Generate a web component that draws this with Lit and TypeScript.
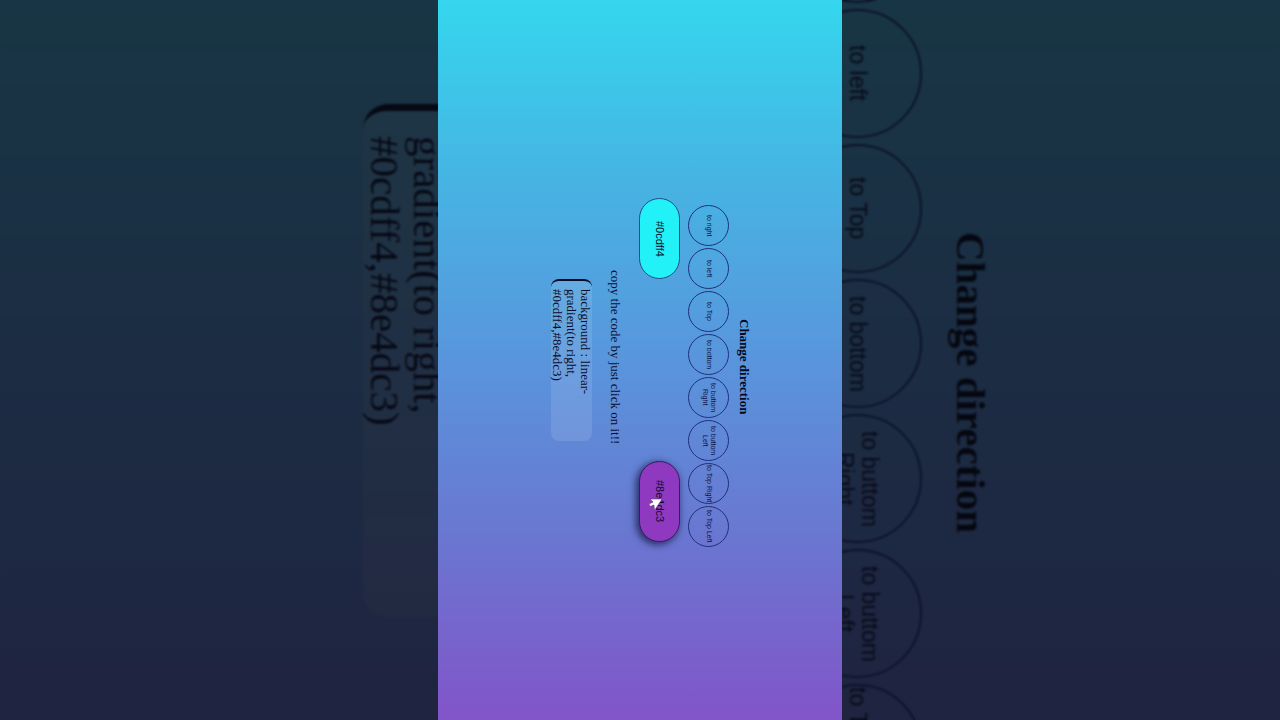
import { LitElement, html, css, nothing } from "lit";
import { customElement, property, state } from "lit/decorators.js";

const DIRECTIONS = [
  "to right",
  "to left",
  "to Top",
  "to bottom",
  "to buttom\nRight",
  "to buttom\nLeft",
  "to Top Right",
  "to Top Left",
];

@customElement("gradient-maker")
class GradientMaker extends LitElement {
  @property({ type: Boolean }) pointer = false;
  @state() private direction = "to right";

  static styles = css`
    :host {
      display: flex;
      flex-direction: column;
      align-items: center;
      padding-block-end: var(--end-space);
      writing-mode: vertical-rl;
      color: #0a0c2c;
      font-family: "Liberation Serif", serif;
      font-size: var(--text);
      line-height: var(--line);
      white-space: nowrap;
    }
    h1 {
      margin: 0;
      padding-inline-start: var(--title-shift);
      font-size: inherit;
      font-weight: bold;
      color: #060719;
    }
    button {
      box-sizing: border-box;
      margin: 0;
      padding: 0;
      color: inherit;
      background: none;
      writing-mode: vertical-rl;
      font-family: "Liberation Sans", sans-serif;
      cursor: pointer;
    }
    .directions {
      display: flex;
      gap: var(--ring-gap);
      margin-block-start: var(--gap);
      padding-inline-start: var(--ring-shift);
    }
    .ring {
      inline-size: var(--ring);
      block-size: var(--ring);
      border: var(--stroke) solid #20307a;
      border-radius: 50%;
      font-size: var(--small);
      line-height: var(--small-line);
      white-space: pre;
      color: #10133f;
    }
    .colors {
      display: flex;
      gap: var(--pill-gap);
      margin-block-start: var(--gap);
      padding-inline-start: var(--pill-shift);
    }
    .pill {
      position: relative;
      inline-size: var(--pill);
      block-size: var(--ring);
      border: var(--stroke) solid #1d4f86;
      border-radius: var(--ring);
      font-size: var(--medium);
    }
    .first {
      background: #22f1f8;
    }
    .second {
      background: #8f39c0;
      border-color: #3a1a66;
      box-shadow: -2px 2px 7px 1px #1c1c4ccc;
    }
    p {
      margin: 0;
      margin-block-start: var(--hint-gap);
      padding-inline-end: var(--hint-shift);
    }
    .code {
      inline-size: var(--box);
      block-size: var(--ring);
      margin-block-start: var(--hint-gap);
      padding-inline-start: var(--inset);
      border: 0 solid #080b28;
      border-inline-start-width: var(--edge);
      border-radius: var(--radius);
      background: #ffffff1c;
      font-family: inherit;
      font-size: inherit;
      line-height: var(--code-line);
      text-align: start;
      white-space: pre;
    }
    .cursor {
      position: absolute;
      top: 36px;
      left: 8px;
      width: 16px;
      height: 14px;
    }
  `;

  render() {
    return html`
      <h1>Change direction</h1>
      <div class="directions">
        ${DIRECTIONS.map(
          (d) => html`<button class="ring" @click=${() => (this.direction = d)}>${d}</button>`
        )}
      </div>
      <div class="colors">
        <button class="pill first">#0cdff4</button>
        <button class="pill second">
          #8e4dc3
          ${this.pointer
            ? html`<svg class="cursor" viewBox="0 0 16 14" aria-hidden="true">
                <path
                  d="M14 1 L2 1 L5 4 L1 6 L2 8.500 L6 7 L6.500 12.500 Z"
                  fill="#fff"
                  stroke="#5d3a78"
                  stroke-width=".6"
                />
              </svg>`
            : nothing}
        </button>
      </div>
      <p>copy the code by just click on it!!</p>
      <button class="code">${`background : linear-\ngradient(${this.direction},\n#0cdff4,#8e4dc3)`}</button>
    `;
  }
}

@customElement("app-root")
class AppRoot extends LitElement {
  static styles = css`
    :host {
      position: relative;
      display: flex;
      justify-content: center;
      height: 100vh;
      overflow: hidden;
      background: #1c2c42;
    }
    .backdrop {
      position: absolute;
      inset: 0;
      display: flex;
      align-items: center;
      justify-content: center;
      background: linear-gradient(#4fb8e2, #5a98dc 45%, #6a74d2);
    }
    .shade {
      position: absolute;
      inset: 0;
      background: #06080ebd;
      backdrop-filter: blur(1px);
    }
    .screen {
      position: relative;
      display: flex;
      align-items: center;
      justify-content: center;
      aspect-ratio: 101 / 180;
      height: 100%;
      background: linear-gradient(#35d6ee, #46b4e3 25%, #5995dc 50%, #6a76d1 75%, #8254c8);
    }
    .small {
      --text: 13px;
      --line: 15px;
      --small: 7px;
      --small-line: 8px;
      --medium: 11px;
      --code-line: 14px;
      --title-shift: 14px;
      --ring-shift: 32px;
      --pill-shift: 20px;
      --hint-shift: 6px;
      --inset: 8px;
      --ring: 41px;
      --ring-gap: 2px;
      --stroke: 1px;
      --gap: 8px;
      --hint-gap: 16px;
      --pill: 81px;
      --pill-gap: 182px;
      --box: 162px;
      --edge: 2px;
      --radius: 8px;
      --end-space: 23px;
    }
    .large {
      --text: 41px;
      --line: 47px;
      --small: 23px;
      --small-line: 25px;
      --medium: 34px;
      --code-line: 43px;
      --title-shift: 46px;
      --ring-shift: 102px;
      --pill-shift: 64px;
      --hint-shift: 20px;
      --inset: 25px;
      --ring: 129px;
      --ring-gap: 6px;
      --stroke: 2px;
      --gap: 25px;
      --hint-gap: 50px;
      --pill: 256px;
      --pill-gap: 576px;
      --box: 513px;
      --edge: 7px;
      --radius: 25px;
      --end-space: 76px;
    }
  `;

  render() {
    return html`
      <div class="backdrop" aria-hidden="true" inert>
        <gradient-maker class="large"></gradient-maker>
      </div>
      <div class="shade"></div>
      <main class="screen">
        <gradient-maker class="small" pointer></gradient-maker>
      </main>
    `;
  }
}
